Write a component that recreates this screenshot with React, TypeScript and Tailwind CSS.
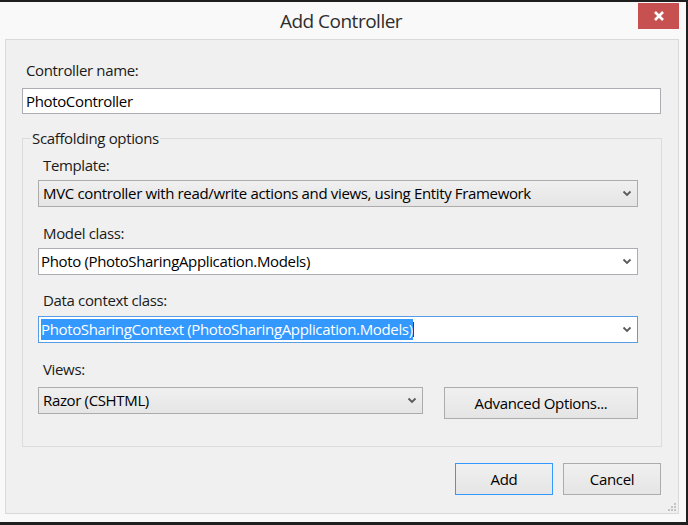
import React from 'react';

const FONT = { fontFamily: "'Open Sans', 'Noto Sans', sans-serif" };

function Chevron() {
  return (
    <svg width="10" height="7" viewBox="0 0 10 7" className="shrink-0">
      <path d="M1.5 1.5 L5 5 L8.5 1.5" fill="none" stroke="#5a5a5a" strokeWidth="1.8" />
    </svg>
  );
}

function Label({ children, className = '' }: { children: React.ReactNode; className?: string }) {
  return <div className={`h-[20px] text-[15px] leading-[20px] text-[#1a1a1a] ${className}`}>{children}</div>;
}

export default function App() {
  return (
    <div className="w-[688px] h-[525px] bg-[#1f1f1f] pt-[2px] pr-[2px] pb-[3px] flex tracking-[-0.35px]" style={FONT}>
      <div className="flex-1 bg-[#f9f9f9] flex flex-col">
        {/* title bar */}
        <div className="relative h-[37px] pt-[5px] flex justify-center shrink-0">
          <span className="text-[19px] leading-[28px] tracking-[-0.5px] text-[#2e2e2e] -ml-[4px]">Add Controller</span>
          <button
            type="button"
            className="absolute right-[7px] top-[1px] w-[41px] h-[26px] bg-[#c75050] flex items-center justify-center"
          >
            <svg width="12" height="12" viewBox="0 0 12 12">
              <path d="M2 2 L10 10 M10 2 L2 10" stroke="#fff" strokeWidth="2.6" />
            </svg>
          </button>
        </div>

        {/* content panel */}
        <div className="relative flex-1 ml-[5px] mr-[7px] mb-[8px] border border-[#d9d9d9] bg-[#f0f0f0] pt-[20px] pl-[16px] pr-[16px] flex flex-col">
          <Label className="ml-[4px]">Controller name:</Label>
          <div className="mt-[8px] mr-[1px] h-[26px] border border-[#abadb3] bg-white pl-[3px] flex items-center text-[15px] text-black">
            PhotoController
          </div>

          <fieldset className="mt-[14px] border border-[#dcdcdc] pl-[15px] pr-[23px] pb-[27px]">
            <legend className="-ml-[7px] px-[1px] h-[20px] text-[15px] leading-[20px] text-[#1a1a1a]">Scaffolding options</legend>

            <Label className="mt-[7px] ml-[5px]">Template:</Label>
            <div className="mt-[5px] h-[27px] border border-[#acacac] bg-gradient-to-b from-[#f0f0f0] to-[#e5e5e5] pl-[4px] pr-[5px] flex items-center justify-between text-[15px] text-black">
              <span>MVC controller with read/write actions and views, using Entity Framework</span>
              <Chevron />
            </div>

            <Label className="mt-[16px] ml-[5px]">Model class:</Label>
            <div className="mt-[5px] h-[27px] border border-[#abadb3] bg-white pl-[2px] pr-[5px] flex items-center justify-between text-[15px] text-black">
              <span>Photo (PhotoSharingApplication.Models)</span>
              <Chevron />
            </div>

            <Label className="mt-[15px] ml-[5px]">Data context class:</Label>
            <div className="mt-[6px] h-[27px] border border-[#569de5] bg-white pl-[2px] pr-[5px] flex items-center justify-between text-[15px]">
              <span className="flex items-center">
                <span className="bg-[#3399ff] text-white h-[21px] leading-[21px]">
                  PhotoSharingContext (PhotoSharingApplication.Models)
                </span>
                <span className="w-[1px] h-[15px] bg-[#5a3a10]" />
              </span>
              <Chevron />
            </div>

            <Label className="mt-[16px] ml-[5px]">Views:</Label>
            <div className="mt-[8px] flex items-start gap-[21px]">
              <div className="w-[385px] h-[27px] border border-[#acacac] bg-gradient-to-b from-[#f0f0f0] to-[#e5e5e5] pl-[4px] pr-[5px] flex items-center justify-between text-[15px] text-black">
                <span>Razor (CSHTML)</span>
                <Chevron />
              </div>
              <button
                type="button"
                className="flex-1 h-[32px] border border-[#acacac] bg-gradient-to-b from-[#f0f0f0] to-[#e5e5e5] text-[15px] text-black"
              >
                Advanced Options...
              </button>
            </div>
          </fieldset>

          <div className="mt-[16px] mr-[1px] flex justify-end gap-[10px]">
            <button
              type="button"
              className="w-[98px] h-[32px] border border-[#3399ff] bg-gradient-to-b from-[#f0f0f0] to-[#e5e5e5] text-[15px] text-black"
            >
              Add
            </button>
            <button
              type="button"
              className="w-[98px] h-[32px] border border-[#acacac] bg-gradient-to-b from-[#f0f0f0] to-[#e5e5e5] text-[15px] text-black"
            >
              Cancel
            </button>
          </div>

          {/* size grip */}
          <svg className="absolute right-[1px] bottom-[1px]" width="10" height="10" viewBox="0 0 10 10">
            <rect x="7" y="1" width="2" height="2" fill="#c4c4c4" />
            <rect x="4" y="4" width="2" height="2" fill="#c4c4c4" />
            <rect x="7" y="4" width="2" height="2" fill="#c4c4c4" />
            <rect x="1" y="7" width="2" height="2" fill="#c4c4c4" />
            <rect x="4" y="7" width="2" height="2" fill="#c4c4c4" />
            <rect x="7" y="7" width="2" height="2" fill="#c4c4c4" />
          </svg>
        </div>
      </div>
    </div>
  );
}
